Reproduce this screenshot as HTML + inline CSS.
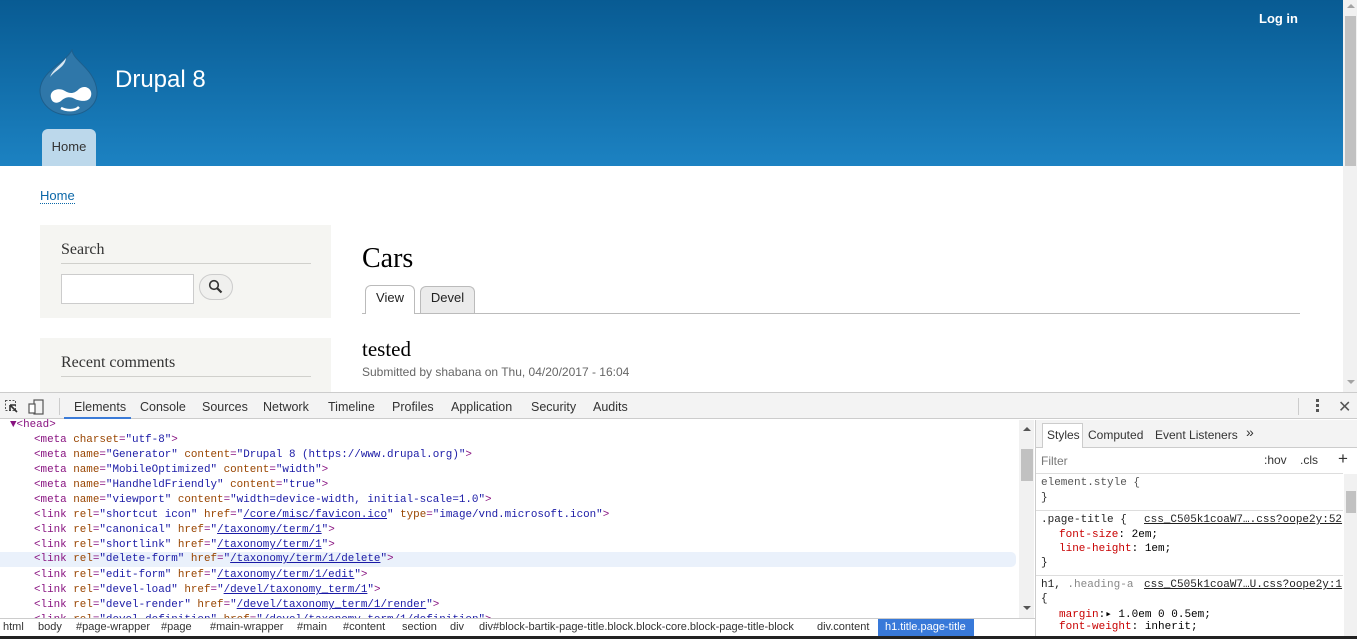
<!DOCTYPE html>
<html><head><style>
*{margin:0;padding:0;box-sizing:border-box}
body{width:1357px;height:639px;overflow:hidden;background:#fff;font-family:"Liberation Sans",sans-serif;position:relative}
.a{position:absolute;white-space:nowrap}
.hdr{position:absolute;left:0;top:0;width:1343px;height:166px;background:linear-gradient(#085b93,#1c82c2)}
.serif{font-family:"Liberation Serif",serif}
.code{font-family:"Liberation Mono",monospace;font-size:10.9px;color:#881280}
.code div{position:absolute;left:34px;white-space:nowrap;height:15px;line-height:15px}
.at{color:#994500}.v{color:#1a1aa6}.u{color:#1a1aa6;text-decoration:underline}.t{color:#881280}
.tab{position:absolute;top:400px;font-size:12.5px;color:#333}
.css{font-family:"Liberation Mono",monospace;font-size:11px}
</style></head><body>
<div class="hdr"></div>
<div class="a" style="left:1259px;top:11px;color:#fff;font-size:13px;font-weight:bold">Log in</div>
<svg class="a" style="left:39px;top:49px" width="60" height="68" viewBox="0 0 60 68">
<path d="M33 1 C34 12 56 20 58 42 C59 56 46 66 30 66 C13 66 1 55 1 41 C2 22 26 14 33 1Z" fill="#2f77a9" stroke="#1d5f8d" stroke-width="1"/>
<path d="M27 9 C22 16 14 20 11 28 C18 20 26 18 27 9Z" fill="#dbe8f1"/>
<path d="M12 49 C10 41 20 38 26 42 C31 45 35 45 40 40 C46 35 54 40 52 47 C50 54 40 52 36 50 C31 47 26 48 22 52 C18 55 13 54 12 49Z" fill="#fff"/>
<path d="M22 59 C28 62 36 62 40 58" stroke="#fff" stroke-width="2.5" fill="none"/>
</svg>
<div class="a" style="left:115px;top:66px;color:#fff;font-size:24px">Drupal 8</div>
<div class="a" style="left:42px;top:129px;width:54px;height:37px;background:#bcd8eb;border-radius:6px 6px 0 0;font-size:13px;color:#333;text-align:center;line-height:36px">Home</div>
<div class="a" style="left:40px;top:188px;font-size:13px;color:#0b67a8;border-bottom:1px dotted #0b67a8;line-height:15px">Home</div>
<div class="a" style="left:40px;top:225px;width:291px;height:93px;background:#f5f5f2"></div>
<div class="a serif" style="left:61px;top:241px;font-size:16px;color:#333">Search</div>
<div class="a" style="left:61px;top:263px;width:250px;height:1px;background:#d0d0cc"></div>
<div class="a" style="left:61px;top:274px;width:133px;height:30px;background:#fff;border:1px solid #ccc"></div>
<div class="a" style="left:199px;top:274px;width:34px;height:26px;background:#f0f0ee;border:1px solid #ccc;border-radius:14px"></div>
<svg class="a" style="left:208px;top:279px" width="16" height="16"><circle cx="6" cy="6" r="4.3" stroke="#333" stroke-width="1.6" fill="none"/><path d="M9 9 L13.5 13.5" stroke="#333" stroke-width="2.2"/></svg>
<div class="a" style="left:40px;top:338px;width:291px;height:54px;background:#f5f5f2"></div>
<div class="a serif" style="left:61px;top:354px;font-size:16px;color:#333">Recent comments</div>
<div class="a" style="left:61px;top:376px;width:250px;height:1px;background:#d0d0cc"></div>
<div class="a serif" style="left:362px;top:243px;font-size:28px;color:#000">Cars</div>
<div class="a" style="left:362px;top:313px;width:938px;height:1px;background:#bbb"></div>
<div class="a" style="left:365px;top:285px;width:50px;height:29px;background:#fff;border:1px solid #bbb;border-bottom:none;border-radius:6px 6px 0 0;font-size:13px;text-align:center;line-height:24px;color:#222">View</div>
<div class="a" style="left:420px;top:286px;width:55px;height:27px;background:#ebebeb;border:1px solid #bbb;border-bottom:none;border-radius:6px 6px 0 0;font-size:13px;text-align:center;line-height:22px;color:#222">Devel</div>
<div class="a serif" style="left:362px;top:337px;font-size:21px;color:#000">tested</div>
<div class="a" style="left:362px;top:365px;font-size:12px;color:#666">Submitted by shabana on Thu, 04/20/2017 - 16:04</div>
<div class="a" style="left:1343px;top:0;width:14px;height:392px;background:#f1f1f1"></div>
<div class="a" style="left:1345px;top:16px;width:11px;height:150px;background:#c1c1c1"></div>
<div class="a" style="left:1347px;top:4px;width:0;height:0;border-left:4px solid transparent;border-right:4px solid transparent;border-bottom:4px solid #a3a3a3"></div>
<div class="a" style="left:1347px;top:380px;width:0;height:0;border-left:4px solid transparent;border-right:4px solid transparent;border-top:4px solid #a3a3a3"></div>
<!-- devtools -->
<div class="a" style="left:0;top:392px;width:1357px;height:1px;background:#ccc"></div>
<div class="a" style="left:0;top:393px;width:1357px;height:26px;background:#f3f3f3;border-bottom:1px solid #ccc"></div>
<svg class="a" style="left:4px;top:399px" width="40" height="16"><rect x="1.5" y="1.5" width="10" height="10" fill="none" stroke="#555" stroke-dasharray="2 1.5"/><path d="M6 6 L13 13 M6 6 L6 12 M6 6 L12 6" stroke="#333" stroke-width="1.6"/><rect x="30" y="1" width="9" height="14" fill="none" stroke="#555" stroke-width="1.2"/><rect x="25" y="5" width="6" height="9" fill="#fff" stroke="#555" stroke-width="1.2"/></svg>
<div class="a" style="left:59px;top:398px;width:1px;height:17px;background:#ccc"></div>
<div class="tab" style="left:74px">Elements</div>
<div class="a" style="left:64px;top:417px;width:67px;height:2px;background:#3b7bd8"></div>
<div class="tab" style="left:140px">Console</div>
<div class="tab" style="left:202px">Sources</div>
<div class="tab" style="left:263px">Network</div>
<div class="tab" style="left:328px">Timeline</div>
<div class="tab" style="left:392px">Profiles</div>
<div class="tab" style="left:451px">Application</div>
<div class="tab" style="left:531px">Security</div>
<div class="tab" style="left:593px">Audits</div>
<div class="a" style="left:1298px;top:398px;width:1px;height:17px;background:#ccc"></div>
<div class="a" style="left:1316px;top:399px;width:3px;height:3px;background:#555;box-shadow:0 5px #555,0 10px #555"></div>
<div class="a" style="left:1338px;top:397px;font-size:16px;color:#555">✕</div>
<div class="code">
<div style="left:10px;top:418px">▼&lt;head&gt;</div>
<div style="top:433px">&lt;meta <span class="at">charset</span>=<span class="v">"utf-8"</span>&gt;</div>
<div style="top:448px">&lt;meta <span class="at">name</span>=<span class="v">"Generator"</span> <span class="at">content</span>=<span class="v">"Drupal 8 (https://www.drupal.org)"</span>&gt;</div>
<div style="top:463px">&lt;meta <span class="at">name</span>=<span class="v">"MobileOptimized"</span> <span class="at">content</span>=<span class="v">"width"</span>&gt;</div>
<div style="top:478px">&lt;meta <span class="at">name</span>=<span class="v">"HandheldFriendly"</span> <span class="at">content</span>=<span class="v">"true"</span>&gt;</div>
<div style="top:493px">&lt;meta <span class="at">name</span>=<span class="v">"viewport"</span> <span class="at">content</span>=<span class="v">"width=device-width, initial-scale=1.0"</span>&gt;</div>
<div style="top:508px">&lt;link <span class="at">rel</span>=<span class="v">"shortcut icon"</span> <span class="at">href</span>=<span class="v">"<span class="u">/core/misc/favicon.ico</span>"</span> <span class="at">type</span>=<span class="v">"image/vnd.microsoft.icon"</span>&gt;</div>
<div style="top:523px">&lt;link <span class="at">rel</span>=<span class="v">"canonical"</span> <span class="at">href</span>=<span class="v">"<span class="u">/taxonomy/term/1</span>"</span>&gt;</div>
<div style="top:538px">&lt;link <span class="at">rel</span>=<span class="v">"shortlink"</span> <span class="at">href</span>=<span class="v">"<span class="u">/taxonomy/term/1</span>"</span>&gt;</div>
<div style="left:0;top:552px;width:1016px;background:#eaf1fb;border-radius:0 5px 5px 0;padding-left:34px">&lt;link <span class="at">rel</span>=<span class="v">"delete-form"</span> <span class="at">href</span>=<span class="v">"<span class="u">/taxonomy/term/1/delete</span>"</span>&gt;</div>
<div style="top:568px">&lt;link <span class="at">rel</span>=<span class="v">"edit-form"</span> <span class="at">href</span>=<span class="v">"<span class="u">/taxonomy/term/1/edit</span>"</span>&gt;</div>
<div style="top:583px">&lt;link <span class="at">rel</span>=<span class="v">"devel-load"</span> <span class="at">href</span>=<span class="v">"<span class="u">/devel/taxonomy_term/1</span>"</span>&gt;</div>
<div style="top:598px">&lt;link <span class="at">rel</span>=<span class="v">"devel-render"</span> <span class="at">href</span>=<span class="v">"<span class="u">/devel/taxonomy_term/1/render</span>"</span>&gt;</div>
<div style="top:613px;height:5px;overflow:hidden">&lt;link <span class="at">rel</span>=<span class="v">"devel-definition"</span> <span class="at">href</span>=<span class="v">"<span class="u">/devel/taxonomy_term/1/definition</span>"</span>&gt;</div>
</div>
<div class="a" style="left:1019px;top:420px;width:15px;height:198px;background:#f1f1f1"></div>
<div class="a" style="left:1021px;top:449px;width:12px;height:32px;background:#c1c1c1"></div>
<div class="a" style="left:1023px;top:427px;border-left:4px solid transparent;border-right:4px solid transparent;border-bottom:4px solid #555"></div>
<div class="a" style="left:1023px;top:606px;border-left:4px solid transparent;border-right:4px solid transparent;border-top:4px solid #555"></div>
<div class="a" style="left:0;top:618px;width:1035px;height:1px;background:#ccc"></div>
<div class="a" style="left:0;top:619px;width:1035px;height:17px;background:#fff;font-size:11px;color:#333;line-height:17px">
<span style="position:absolute;left:3px">html</span><span style="position:absolute;left:38px">body</span><span style="position:absolute;left:76px">#page-wrapper</span><span style="position:absolute;left:161px">#page</span><span style="position:absolute;left:210px">#main-wrapper</span><span style="position:absolute;left:297px">#main</span><span style="position:absolute;left:343px">#content</span><span style="position:absolute;left:402px">section</span><span style="position:absolute;left:450px">div</span><span style="position:absolute;left:479px">div#block-bartik-page-title.block.block-core.block-page-title-block</span><span style="position:absolute;left:817px">div.content</span><span style="position:absolute;left:878px;width:96px;background:#3879d9;color:#fff;padding-left:7px">h1.title.page-title</span></div>
<div class="a" style="left:0;top:636px;width:1357px;height:3px;background:#222"></div>
<!-- styles pane -->
<div class="a" style="left:1035px;top:420px;width:1px;height:216px;background:#ccc"></div>
<div class="a" style="left:1036px;top:420px;width:321px;height:28px;background:#f3f3f3;border-bottom:1px solid #ccc"></div>
<div class="a" style="left:1042px;top:423px;width:41px;height:25px;background:#fff;border:1px solid #ccc;border-bottom:none"></div>
<div class="a" style="left:1047px;top:428px;font-size:12px;color:#333">Styles</div>
<div class="a" style="left:1088px;top:428px;font-size:12px;color:#333">Computed</div>
<div class="a" style="left:1155px;top:428px;font-size:12px;color:#333">Event Listeners</div>
<div class="a" style="left:1246px;top:424px;font-size:14px;color:#333">»</div>
<div class="a" style="left:1041px;top:454px;font-size:12px;color:#777">Filter</div>
<div class="a" style="left:1264px;top:453px;font-size:12px;color:#333">:hov</div>
<div class="a" style="left:1300px;top:453px;font-size:12px;color:#333">.cls</div>
<div class="a" style="left:1338px;top:449px;font-size:17px;color:#333">+</div>
<div class="a" style="left:1036px;top:473px;width:307px;height:1px;background:#ddd"></div>
<div class="a css" style="left:1041px;top:477px;color:#555">element.style {</div>
<div class="a css" style="left:1041px;top:492px;color:#333">}</div>
<div class="a" style="left:1036px;top:510px;width:307px;height:1px;background:#ddd"></div>
<div class="a css" style="left:1041px;top:514px;color:#222">.page-title {</div>
<div class="a css" style="left:1144px;top:514px;color:#222;text-decoration:underline">css_C505k1coaW7….css?oope2y:52</div>
<div class="a css" style="left:1059px;top:529px"><span style="color:#c80000">font-size</span>: 2em;</div>
<div class="a css" style="left:1059px;top:543px"><span style="color:#c80000">line-height</span>: 1em;</div>
<div class="a css" style="left:1041px;top:557px;color:#222">}</div>
<div class="a" style="left:1036px;top:575px;width:307px;height:1px;background:#ddd"></div>
<div class="a css" style="left:1041px;top:579px;color:#222">h1, <span style="color:#888">.heading-a</span></div>
<div class="a css" style="left:1144px;top:579px;color:#222;text-decoration:underline">css_C505k1coaW7…U.css?oope2y:1</div>
<div class="a css" style="left:1041px;top:593px;color:#222">{</div>
<div class="a css" style="left:1059px;top:607px"><span style="color:#c80000">margin</span>:▸ 1.0em 0 0.5em;</div>
<div class="a css" style="left:1059px;top:621px"><span style="color:#c80000">font-weight</span>: inherit;</div>
<div class="a" style="left:1344px;top:474px;width:13px;height:162px;background:#f1f1f1"></div>
<div class="a" style="left:1346px;top:491px;width:10px;height:22px;background:#c1c1c1"></div>
</body></html>
